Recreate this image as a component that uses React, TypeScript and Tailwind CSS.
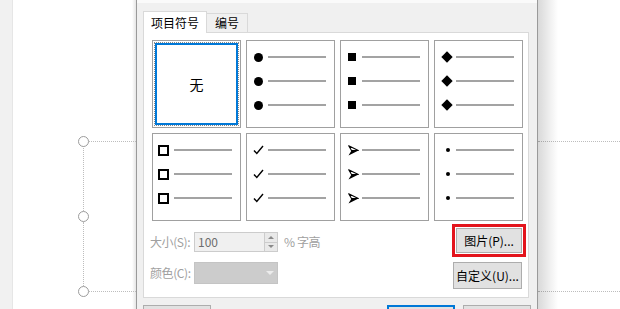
import React from "react";

const FONT = { fontFamily: '"Noto Sans CJK SC", "Noto Sans", sans-serif' };

type Marker = "none" | "dot" | "square" | "diamond" | "box" | "check" | "arrow" | "small";

const Bullet = ({ kind }: { kind: Marker }) => {
  if (kind === "dot") return <div className="w-[9px] h-[9px] rounded-full bg-black" />;
  if (kind === "square") return <div className="w-2 h-2 bg-black" />;
  if (kind === "diamond") return <div className="w-2 h-2 bg-black rotate-45 ml-px" />;
  if (kind === "box")
    return <div className="w-[11px] h-[11px] border-2 border-black bg-white -ml-[2px]" />;
  if (kind === "small") return <div className="w-1 h-1 rounded-full bg-black ml-[4px]" />;
  if (kind === "check")
    return (
      <svg width="11" height="10" viewBox="0 0 11 10" className="-ml-px">
        <path d="M1 5.5 L3.8 8.5 L10 1" fill="none" stroke="#000" strokeWidth="1.4" />
      </svg>
    );
  // arrowhead like ➢
  return (
    <svg width="11" height="11" viewBox="0 0 11 11">
      <path d="M0.7 0.7 L10.3 5.5 L3.5 5.5 Z" fill="white" stroke="#000" strokeWidth="1.1" strokeLinejoin="round" />
      <path d="M3.5 5.5 L10.5 5.5 L0.5 10.5 Z" fill="#000" />
    </svg>
  );
};

const Cell = ({ kind }: { kind: Marker }) => {
  if (kind === "none") {
    return (
      <div className="h-[88px] border border-[#a0a0a0] bg-white p-px">
        <div className="h-full border border-dotted border-[#8a8a8a]">
          <div className="h-full border-2 border-[#0078d7] flex items-center justify-center text-[14px] text-black">
            无
          </div>
        </div>
      </div>
    );
  }
  return (
    <div className="h-[88px] border border-[#a0a0a0] bg-white pt-[4px] pl-[7px]">
      {[0, 1, 2].map((i) => (
        <div key={i} className="h-[24px] flex items-center">
          <div className="w-[14px] flex items-center">
            <Bullet kind={kind} />
          </div>
          <div className="w-[58px] h-[2px] bg-[#a3a3a3]" />
        </div>
      ))}
    </div>
  );
};

const Handle = ({ top }: { top: number }) => (
  <div
    className="absolute left-[78px] w-[11px] h-[11px] rounded-full border border-[#9c9c9c] bg-white"
    style={{ top }}
  />
);

export default function App() {
  const cells: Marker[] = ["none", "dot", "square", "diamond", "box", "check", "arrow", "small"];

  return (
    <div className="w-[620px] h-[309px] overflow-hidden flex bg-white text-[12px]" style={FONT}>
      {/* slide area on the left */}
      <div className="relative w-[136px] h-full flex shrink-0">
        <div className="w-[13px] h-full bg-[#f1f1f1] border-r border-[#e6e6e6]" />
        <div className="flex-1 h-full bg-white" />
        <div className="absolute top-0 right-0 w-[4px] h-full bg-gradient-to-r from-transparent to-black/10" />
        {/* placeholder outline */}
        <div className="absolute left-[83px] top-[146px] h-[65px] border-l border-dotted border-[#bdbdbd]" />
        <div className="absolute left-[83px] top-[222px] h-[64px] border-l border-dotted border-[#bdbdbd]" />
        <div className="absolute left-[89px] right-0 top-[141px] border-t border-dotted border-[#bdbdbd]" />
        <div className="absolute left-[89px] right-0 top-[291px] border-t border-dotted border-[#bdbdbd]" />
        <Handle top={136} />
        <Handle top={211} />
        <Handle top={286} />
      </div>

      {/* dialog */}
      <div className="w-[402px] h-full shrink-0 bg-[#f0f0f0] border-x border-[#9a9a9a] flex flex-col">
        <div className="h-[3px] shrink-0 bg-[#fafafa]" />
        <div className="pl-[6px] pt-[8px]">
          {/* tabs */}
          <div className="h-[21px] flex items-start">
            <div className="relative z-10 h-[22px] w-[64px] bg-white border border-b-0 border-[#d9d9d9] flex items-center justify-center text-black">
              项目符号
            </div>
            <div className="mt-[2px] h-[19px] w-[41px] border border-l-0 border-b-0 border-[#d9d9d9] flex items-center justify-center text-black">
              编号
            </div>
          </div>

          {/* tab panel */}
          <div className="w-[386px] h-[266px] bg-white border border-[#d9d9d9] pt-[7px] pl-[8px]">
            <div className="grid grid-cols-[repeat(4,89px)] gap-[5px]">
              {cells.map((c, i) => (
                <Cell key={i} kind={c} />
              ))}
            </div>

            <div className="flex">
              <div className="mt-[11px] -ml-[2px] text-[#a0a0a0] whitespace-nowrap tracking-[-0.4px]">
                <div className="h-[20px] flex items-center">
                  <div className="w-[44px]">大小(S):</div>
                  <div className="w-[84px] h-[20px] border border-[#cccccc] bg-[#f0f0f0] flex tracking-normal">
                    <div className="flex-1 pl-[3px] flex items-center text-[#6d6d6d]">100</div>
                    <div className="w-[13px] border-l border-[#cccccc] flex flex-col">
                      <div className="flex-1 bg-[#e9e9e9] border-b border-[#cccccc] flex items-center justify-center">
                        <div className="w-0 h-0 border-x-[3px] border-x-transparent border-b-[3px] border-b-[#8a8a8a]" />
                      </div>
                      <div className="flex-1 bg-[#e9e9e9] flex items-center justify-center">
                        <div className="w-0 h-0 border-x-[3px] border-x-transparent border-t-[3px] border-t-[#8a8a8a]" />
                      </div>
                    </div>
                  </div>
                  <div className="ml-[6px]">% 字高</div>
                </div>
                <div className="mt-[10px] h-[22px] flex items-center">
                  <div className="w-[44px]">颜色(C):</div>
                  <div className="w-[84px] h-[22px] border border-[#c4c4c4] bg-[#cccccc] flex items-center justify-end pr-[3px]">
                    <div className="w-0 h-0 border-x-[4px] border-x-transparent border-t-[4px] border-t-[#ececec]" />
                  </div>
                </div>
              </div>

              <div className="ml-auto mr-[2px] mt-[3px] flex flex-col items-end">
                <div className="border-[3px] border-[#e3141c] p-px">
                  <div className="w-[66px] h-[25px] bg-[#e1e1e1] border border-[#adadad] flex items-center justify-center text-black">
                    图片(P)...
                  </div>
                </div>
                <div className="mt-[5px] mr-[4px] w-[69px] h-[27px] bg-[#e1e1e1] border border-[#adadad] flex items-center justify-center text-black">
                  自定义(U)...
                </div>
              </div>
            </div>
          </div>
        </div>

        {/* dialog buttons (cut off) */}
        <div className="mt-[7px] px-[6px] flex">
          <div className="w-[68px] h-[23px] bg-[#e1e1e1] border border-[#adadad]" />
          <div className="ml-auto w-[68px] h-[23px] bg-[#e1e1e1] border-2 border-[#0078d7]" />
          <div className="ml-[8px] w-[68px] h-[23px] bg-[#e1e1e1] border border-[#adadad]" />
        </div>
      </div>

      {/* slide area on the right */}
      <div className="relative flex-1 h-full bg-white">
        <div className="absolute left-0 right-0 top-[141px] border-t border-dotted border-[#bdbdbd]" />
        <div className="absolute left-0 right-0 top-[291px] border-t border-dotted border-[#bdbdbd]" />
        <div className="absolute left-0 top-0 w-[20px] h-full bg-gradient-to-r from-black/15 to-transparent" />
      </div>
    </div>
  );
}
